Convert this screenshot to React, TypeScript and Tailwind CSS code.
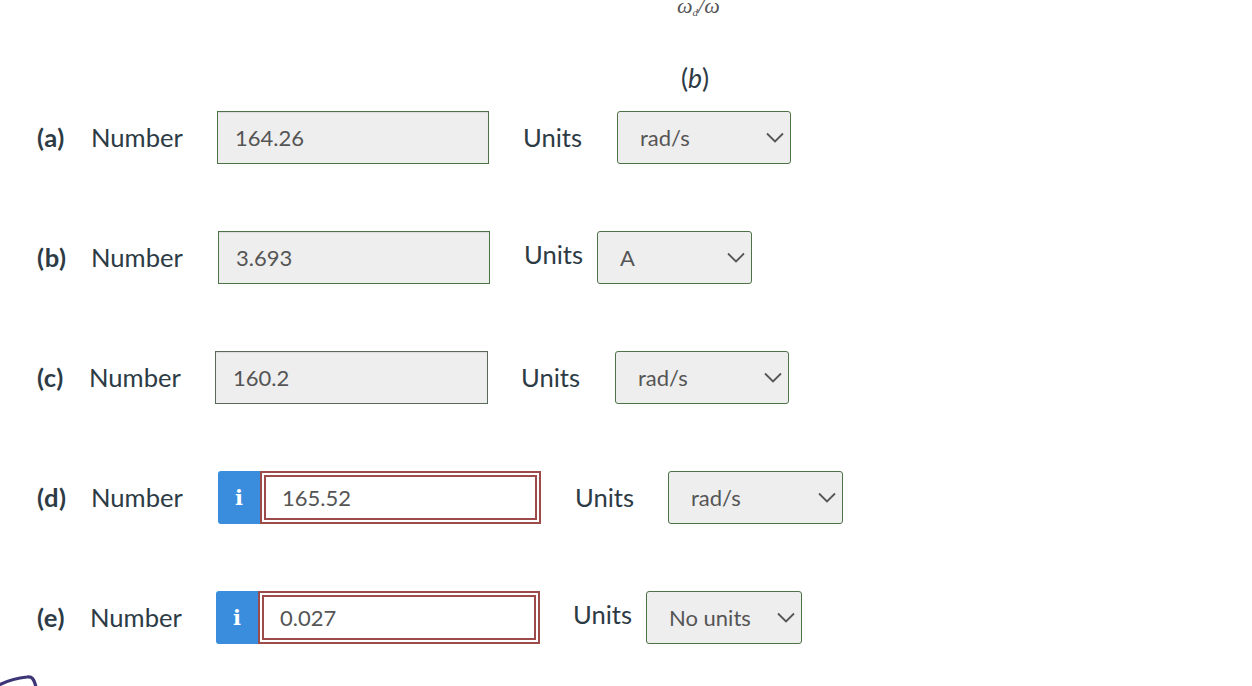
const green = 'border-[#4d7245]';

function Chevron() {
  return (
    <svg
      className="pointer-events-none absolute top-[21px] right-[7px]"
      width="18"
      height="11"
      viewBox="0 0 18 11"
      fill="none"
      stroke="#555"
      strokeWidth="1.8"
    >
      <path d="M1 1.5 L9 9.5 L17 1.5" />
    </svg>
  );
}

function UnitSelect({ value, className }: { value: string; className: string }) {
  return (
    <div className={`relative h-[53px] shrink-0 ${className}`}>
      <select
        defaultValue={value}
        className={`block h-full w-full appearance-none rounded-[3px] border ${green} bg-[#eeeeee] pb-[1px] pl-[22px] text-[22px] leading-normal text-[#555555] outline-none`}
      >
        <option>{value}</option>
      </select>
      <Chevron />
    </div>
  );
}

function InfoButton() {
  return (
    <div className="flex h-[53px] w-[42px] shrink-0 items-center justify-center rounded-l-[3px] bg-[#3a8cdd] font-['DejaVu_Serif',serif] text-[21px] font-bold text-white">
      i
    </div>
  );
}

function WrongInput({ value, className }: { value: string; className: string }) {
  return (
    <div className={`h-[53px] shrink-0 border-2 border-[#9d4a4a] bg-white p-[2px] ${className}`}>
      <input
        readOnly
        value={value}
        className="block h-full w-full border-2 border-[#9d4a4a] bg-white pl-[16px] text-[22px] leading-normal text-[#555555] outline-none"
      />
    </div>
  );
}

function DoneInput({ value, className }: { value: string; className: string }) {
  return (
    <input
      readOnly
      value={value}
      className={`block h-[53px] shrink-0 border bg-[#eeeeee] pl-[17px] text-[22px] leading-normal text-[#555555] shadow-[inset_0_1px_1px_rgba(0,0,0,0.08)] outline-none ${className}`}
    />
  );
}

export default function App() {
  return (
    <div className="relative h-[686px] w-[1252px] overflow-hidden bg-white font-['Lato',sans-serif] text-[25.6px] leading-[53px] text-[#2d3b45]">
      <div className="h-[111px]">
        <div className="h-[12px] pl-[677px] font-['Liberation_Serif',serif] text-[22px] leading-[12px] text-[#555555] italic">
          ω<sub className="text-[11px]">d</sub>/ω
        </div>
        <div className="pl-[681px] pt-[51px] text-[26.5px] leading-[30px] italic">
          <span className="not-italic">(</span>b<span className="not-italic">)</span>
        </div>
      </div>

      <div className="flex flex-col gap-[67px] pl-[37px]">
        <div className="flex h-[53px] items-center">
          <span className="w-[54px] font-bold tracking-[0.6px]">(a)</span>
          <span className="w-[126px]">Number</span>
          <DoneInput value="164.26" className={`w-[272px] ${green}`} />
          <span className="ml-[34px] w-[94px]">Units</span>
          <UnitSelect value="rad/s" className="w-[174px]" />
        </div>

        <div className="flex h-[53px] items-center">
          <span className="w-[54px] font-bold tracking-[0.6px]">(b)</span>
          <span className="w-[127px]">Number</span>
          <DoneInput value="3.693" className={`w-[272px] ${green}`} />
          <span className="ml-[34px] w-[73px] -translate-y-[3px]">Units</span>
          <UnitSelect value="A" className="w-[155px]" />
        </div>

        <div className="flex h-[53px] items-center">
          <span className="w-[52px] font-bold tracking-[0.6px]">(c)</span>
          <span className="w-[126px]">Number</span>
          <DoneInput value="160.2" className="w-[273px] border-[#5a6a58]" />
          <span className="ml-[33px] w-[94px]">Units</span>
          <UnitSelect value="rad/s" className="w-[174px]" />
        </div>

        <div className="flex h-[53px] items-center">
          <span className="w-[54px] font-bold tracking-[0.6px]">(d)</span>
          <span className="w-[127px]">Number</span>
          <InfoButton />
          <WrongInput value="165.52" className="w-[281px]" />
          <span className="ml-[34px] w-[93px]">Units</span>
          <UnitSelect value="rad/s" className="w-[175px]" />
        </div>

        <div className="flex h-[53px] items-center">
          <span className="w-[53px] font-bold tracking-[0.6px]">(e)</span>
          <span className="w-[126px]">Number</span>
          <InfoButton />
          <WrongInput value="0.027" className="w-[282px]" />
          <span className="ml-[33px] w-[73px] -translate-y-[3px]">Units</span>
          <UnitSelect value="No units" className="w-[156px]" />
        </div>
      </div>

      <svg className="absolute bottom-0 left-0" width="40" height="14" viewBox="0 0 40 14" fill="none">
        <path
          d="M-1 13 C7 9 16 6 27 5 C32 4 34 7 36 15"
          stroke="#3c3678"
          strokeWidth="3.2"
          strokeLinecap="round"
        />
      </svg>
    </div>
  );
}
